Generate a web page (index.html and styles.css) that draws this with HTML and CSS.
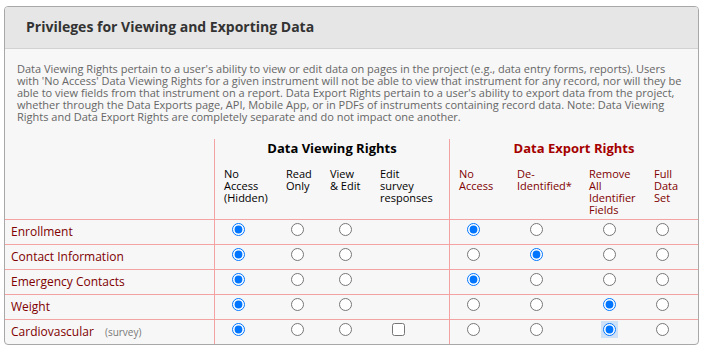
FILE: index.html
```html
<!DOCTYPE html>
<html lang="en">

<head>
    <meta charset="UTF-8">
    <title>Privileges for Viewing and Exporting Data</title>
    <link rel="stylesheet" href="styles.css">
</head>

<body>
    <div class="priv-card">
        <div class="priv-head">Privileges for Viewing and Exporting Data</div>
        <p class="priv-note">Data Viewing Rights pertain to a user's ability to view or edit data on pages in the project (e.g., data entry forms, reports). Users with 'No Access' Data Viewing Rights for a given instrument will not be able to view that instrument for any record, nor will they be able to view fields from that instrument on a report. Data Export Rights pertain to a user's ability to export data from the project, whether through the Data Exports page, API, Mobile App, or in PDFs of instruments containing record data. Note: Data Viewing Rights and Data Export Rights are completely separate and do not impact one another.</p>

        <div class="rights">
            <div class="rights-head">
                <div class="corner"></div>
                <div class="group group-view">Data Viewing Rights</div>
                <div class="group group-export">Data Export Rights</div>
                <div class="sub">No<br>Access<br>(Hidden)</div>
                <div class="sub">Read<br>Only</div>
                <div class="sub">View<br>&amp; Edit</div>
                <div class="sub">Edit<br>survey<br>responses</div>
                <div class="sub exp">No<br>Access</div>
                <div class="sub exp">De-<br>Identified*</div>
                <div class="sub exp">Remove<br>All<br>Identifier<br>Fields</div>
                <div class="sub exp">Full<br>Data<br>Set</div>
            </div>

            <div class="rights-row">
                <div class="form-name">Enrollment</div>
                <div class="opt"><input type="radio" name="v1" checked></div>
                <div class="opt"><input type="radio" name="v1"></div>
                <div class="opt"><input type="radio" name="v1"></div>
                <div class="opt"></div>
                <div class="opt"><input type="radio" name="e1" checked></div>
                <div class="opt"><input type="radio" name="e1"></div>
                <div class="opt"><input type="radio" name="e1"></div>
                <div class="opt"><input type="radio" name="e1"></div>
            </div>
            <div class="rights-row">
                <div class="form-name">Contact Information</div>
                <div class="opt"><input type="radio" name="v2" checked></div>
                <div class="opt"><input type="radio" name="v2"></div>
                <div class="opt"><input type="radio" name="v2"></div>
                <div class="opt"></div>
                <div class="opt"><input type="radio" name="e2"></div>
                <div class="opt"><input type="radio" name="e2" checked></div>
                <div class="opt"><input type="radio" name="e2"></div>
                <div class="opt"><input type="radio" name="e2"></div>
            </div>
            <div class="rights-row">
                <div class="form-name">Emergency Contacts</div>
                <div class="opt"><input type="radio" name="v3" checked></div>
                <div class="opt"><input type="radio" name="v3"></div>
                <div class="opt"><input type="radio" name="v3"></div>
                <div class="opt"></div>
                <div class="opt"><input type="radio" name="e3" checked></div>
                <div class="opt"><input type="radio" name="e3"></div>
                <div class="opt"><input type="radio" name="e3"></div>
                <div class="opt"><input type="radio" name="e3"></div>
            </div>
            <div class="rights-row">
                <div class="form-name">Weight</div>
                <div class="opt"><input type="radio" name="v4" checked></div>
                <div class="opt"><input type="radio" name="v4"></div>
                <div class="opt"><input type="radio" name="v4"></div>
                <div class="opt"></div>
                <div class="opt"><input type="radio" name="e4"></div>
                <div class="opt"><input type="radio" name="e4"></div>
                <div class="opt"><input type="radio" name="e4" checked></div>
                <div class="opt"><input type="radio" name="e4"></div>
            </div>
            <div class="rights-row">
                <div class="form-name">Cardiovascular <span class="survey-tag">(survey)</span></div>
                <div class="opt"><input type="radio" name="v5" checked></div>
                <div class="opt"><input type="radio" name="v5"></div>
                <div class="opt"><input type="radio" name="v5"></div>
                <div class="opt"><input type="checkbox"></div>
                <div class="opt"><input type="radio" name="e5"></div>
                <div class="opt"><input type="radio" name="e5"></div>
                <div class="opt"><span class="focused"><input type="radio" name="e5" checked></span></div>
                <div class="opt"><input type="radio" name="e5"></div>
            </div>
        </div>
    </div>
</body>

</html>
```

FILE: styles.css
```css
html,
body {
    margin: 0;
    background: #fff;
}

body {
    padding: 6px 6px 0 4px;
    font-family: "Open Sans", "Liberation Sans", sans-serif;
    font-size: 11px;
}

.priv-card {
    border: 1px solid #a8a8a8;
    border-radius: 4px;
    background: #f7f7f7;
    overflow: hidden;
}

.priv-head {
    background: #e6e6e6;
    border-bottom: 1px solid #d2d2d2;
    padding: 10px 21px 11px;
    line-height: 20px;
    font-size: 14px;
    font-weight: bold;
    color: #333;
}

.priv-note {
    margin: 0;
    padding: 14px 12px 16px;
    line-height: 12px;
    color: #666;
}

/* shared column layout for the header and every instrument row */
.rights-head,
.rights-row {
    display: grid;
    grid-template-columns: 209px 66px 44px 50px 75px 62px 72px 65px 1fr;
}

.corner {
    grid-row: span 2;
}

.group {
    grid-column: span 4;
    text-align: center;
    font-size: 13px;
    font-weight: bold;
    line-height: 16px;
    padding: 1px 0 12px;
    border-left: 1px solid #f4a3a3;
    color: #000;
}

.group-export {
    color: #a50000;
}

.sub {
    padding: 0 4px 3px 6px;
    line-height: 12px;
    color: #000;
}

.sub:nth-child(4),
.sub:nth-child(8) {
    padding-left: 9px;
    border-left: 1px solid #f4a3a3;
}

.sub.exp {
    color: #800000;
}

.rights-row {
    height: 25px;
    border-top: 1px solid #f4a3a3;
    box-sizing: border-box;
}

.form-name {
    padding: 4px 0 0 6px;
    font-size: 12px;
    line-height: 16px;
    color: #800000;
}

.survey-tag {
    margin-left: 8px;
    font-size: 10px;
    color: #777;
}

.opt {
    display: flex;
    align-items: flex-start;
    padding-top: 3px;
}

.opt input {
    margin: 0;
    width: 13px;
    height: 13px;
}

.opt:nth-child(2) { padding-left: 17px; border-left: 1px solid #f4a3a3; }
.opt:nth-child(3) { padding-left: 11px; }
.opt:nth-child(4) { padding-left: 15px; }
.opt:nth-child(5) { padding-left: 18px; }
.opt:nth-child(6) { padding-left: 17px; border-left: 1px solid #f4a3a3; }
.opt:nth-child(7) { padding-left: 19px; }
.opt:nth-child(8) { padding-left: 20px; }
.opt:nth-child(9) { padding-left: 8px; }

.focused {
    display: inline-flex;
    margin: -2px 0 0 -2px;
    padding: 2px;
    background: #cfe1f7;
}
```
